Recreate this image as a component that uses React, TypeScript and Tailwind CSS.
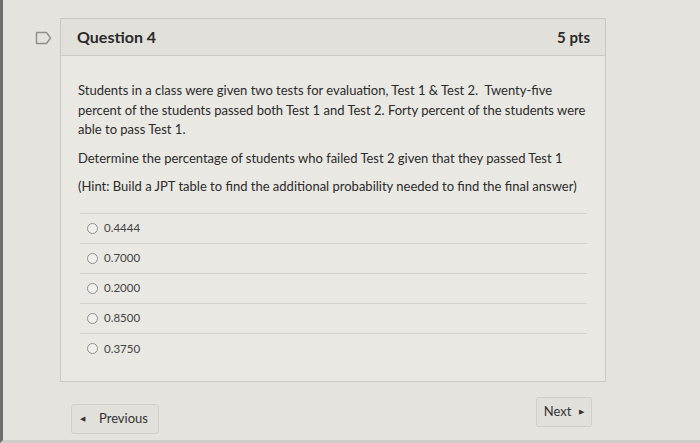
const answers = ["0.4444", "0.7000", "0.2000", "0.8500", "0.3750"];

function FlagIcon() {
  return (
    <svg width="17" height="14" viewBox="0 0 17 14" fill="none">
      <path
        d="M1.5 1.5 H11.5 L15.5 7 L11.5 12.5 H1.5 Z"
        stroke="#8e8e8c"
        strokeWidth="1.4"
        strokeLinejoin="round"
      />
    </svg>
  );
}

function Radio() {
  return (
    <span className="w-[11px] h-[11px] rounded-full border border-[#8d8d8b] bg-[#f1f0ec] shrink-0" />
  );
}

export default function App() {
  return (
    <div
      className="w-[700px] h-[443px] overflow-hidden bg-[#e4e3de] border-l-[3px] border-b-[3px] border-l-[#6e6e6c] border-b-[#cfcec8] text-[#2b2b2b]"
      style={{ fontFamily: "Lato, 'Open Sans', sans-serif" }}
    >
      <div className="flex pt-[18px]">
        <div className="w-[57px] shrink-0 pt-[13px] pl-[32px]">
          <FlagIcon />
        </div>

        <div className="w-[546px] flex flex-col">
          <section className="border border-[#cac9c4] bg-[#e9e8e3]">
            <header className="h-[37px] flex items-center justify-between pl-[16px] pr-[15px] bg-[#e1e0db] border-b border-[#cac9c4]">
              <h2 className="text-[16px] font-bold text-[#2a2a2a]">Question 4</h2>
              <span className="text-[15px] font-bold text-[#2a2a2a]">5 pts</span>
            </header>

            <div className="pt-[25px] pl-[17px] pr-[14px] text-[13px] leading-[19.5px] text-[#2a2a2a]">
              <p>
                Students in a class were given two tests for evaluation, Test 1 &amp; Test 2.&nbsp; Twenty-five
                <br />
                percent of the students passed both Test 1 and Test 2. Forty percent of the students were
                <br />
                able to pass Test 1.
              </p>
              <p className="mt-[9px]">
                Determine the percentage of students who failed Test 2 given that they passed Test 1
              </p>
              <p className="mt-[9px]">
                (Hint: Build a JPT table to find the additional probability needed to find the final answer)
              </p>
            </div>

            <div className="mt-[16px] ml-[19px] mr-[18px] mb-[17px] border-t border-[#d2d1cc]">
              {answers.map((a, i) => (
                <div
                  key={a}
                  className={`h-[30px] flex items-center gap-[6px] pl-[7px] ${
                    i < answers.length - 1 ? "border-b border-[#d2d1cc]" : ""
                  }`}
                >
                  <Radio />
                  <span className="text-[11.5px] text-[#444]">{a}</span>
                </div>
              ))}
            </div>
          </section>

          <div className="flex justify-between items-start pl-[11px] pr-[14px]">
            <button className="mt-[22px] h-[30px] w-[88px] flex items-center gap-[14px] pl-[8px] bg-[#e1e0db] border border-[#d0cfca] rounded-[3px] text-[13px] text-[#333]">
              <span className="text-[7px]">◀</span>
              Previous
            </button>
            <button className="mt-[15px] h-[30px] w-[56px] flex items-center justify-center gap-[8px] bg-[#e1e0db] border border-[#d0cfca] rounded-[3px] text-[13px] text-[#333]">
              Next
              <span className="text-[7px]">▶</span>
            </button>
          </div>
        </div>
      </div>
    </div>
  );
}
